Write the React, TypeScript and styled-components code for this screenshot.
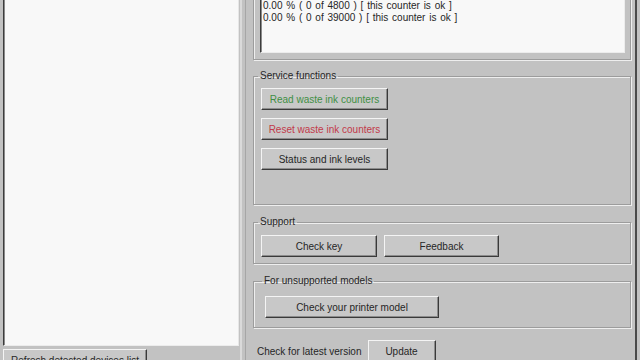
import styled, { createGlobalStyle } from "styled-components";

const GlobalStyle = createGlobalStyle`
  html, body {
    margin: 0;
    padding: 0;
    background: #c2c2c2;
  }
  body {
    font-family: "Liberation Sans", Arial, sans-serif;
    font-size: 10px;
    color: #262626;
  }
`;

const Window = styled.div`
  display: flex;
  width: 640px;
  height: 360px;
  overflow: hidden;
  background: #c2c2c2;
`;

const LeftPane = styled.div`
  display: flex;
  flex-direction: column;
  width: 239px;
  padding-left: 3px;
  box-sizing: border-box;
  flex-shrink: 0;
`;

const DeviceList = styled.div`
  margin-top: -10px;
  height: 356px;
  flex-shrink: 0;
  box-sizing: border-box;
  background: #f8f8f8;
  border: 1px solid;
  border-color: #3c3c3c #e6e6e6 #ececec #3c3c3c;
  box-shadow: inset 1px 1px 0 #8a8a8a;
`;

const Splitter = styled.div`
  width: 3px;
  margin-left: 1px;
  border-left: 2px solid #dadada;
  border-right: 1px solid #a6a6a6;
  flex-shrink: 0;
`;

const RightPane = styled.div`
  display: flex;
  flex-direction: column;
  width: 389px;
  padding: 0 4px 0 7px;
  box-sizing: border-box;
  flex-shrink: 0;
`;

const WindowEdge = styled.div`
  width: 2px;
  background: #4a4a4a;
  flex-shrink: 0;
`;

const TopGroup = styled.div`
  margin-top: -24px;
  flex-shrink: 0;
  padding: 8px 5px 6px 6px;
  border: 1px solid #9c9c9c;
  box-shadow: inset 1px 1px 0 #eeeeee, 1px 1px 0 #eeeeee;
`;

const CounterBox = styled.div`
  height: 68px;
  box-sizing: border-box;
  padding: 14px 2px 0;
  background: #f8f8f8;
  border: 1px solid;
  border-color: #3c3c3c #ececec #ececec #3c3c3c;
  box-shadow: inset 1px 1px 0 #8a8a8a;
  line-height: 12px;
  word-spacing: 1px;
  white-space: pre;
`;

const Group = styled.fieldset<{ $mt: number; $pt: number; $pb: number; $pl: number }>`
  margin: ${({ $mt }) => $mt}px 0 0;
  padding: ${({ $pt }) => $pt}px 6px ${({ $pb }) => $pb}px ${({ $pl }) => $pl}px;
  min-width: 0;
  flex-shrink: 0;
  border: 1px solid #9c9c9c;
  box-shadow: inset 1px 1px 0 #eeeeee, 1px 1px 0 #eeeeee;
`;

const GroupTitle = styled.legend`
  margin-left: -3px;
  padding: 0 2px;
  line-height: 12px;
  color: #262626;
`;

const ButtonStack = styled.div`
  display: flex;
  flex-direction: column;
  gap: 8px;
`;

const ButtonRow = styled.div`
  display: flex;
  gap: 7px;
`;

const tones = {
  plain: "#262626",
  green: "#3f8f45",
  red: "#c23a4a",
};

const Button = styled.button<{ $w: number; $tone?: keyof typeof tones }>`
  width: ${({ $w }) => $w}px;
  height: 22px;
  flex-shrink: 0;
  margin: 0;
  padding: 0;
  box-sizing: border-box;
  font-family: "Liberation Sans", Arial, sans-serif;
  font-size: 10px;
  color: ${({ $tone }) => tones[$tone ?? "plain"]};
  background: #c8c8c8;
  border: 1px solid;
  border-color: #f4f4f4 #3a3a3a #3a3a3a #f4f4f4;
  box-shadow: inset -1px -1px 0 #8c8c8c;
`;

const RefreshButton = styled(Button)`
  margin-top: 3px;
`;

const VersionRow = styled.div`
  display: flex;
  align-items: center;
  gap: 6px;
  margin-top: 12px;
  padding-left: 4px;
  flex-shrink: 0;
`;

const VersionLabel = styled.span`
  color: #262626;
`;

export default function App() {
  return (
    <>
      <GlobalStyle />
      <Window>
        <LeftPane>
          <DeviceList />
          <RefreshButton $w={144}>Refresh detected devices list</RefreshButton>
        </LeftPane>
        <Splitter />
        <RightPane>
          <TopGroup>
            <CounterBox>
              {"0.00 % ( 0 of 4800 ) [ this counter is ok ]\n0.00 % ( 0 of 39000 ) [ this counter is ok ]"}
            </CounterBox>
          </TopGroup>

          <Group $mt={10} $pt={6} $pb={34} $pl={7}>
            <GroupTitle>Service functions</GroupTitle>
            <ButtonStack>
              <Button $w={127} $tone="green">Read waste ink counters</Button>
              <Button $w={127} $tone="red">Reset waste ink counters</Button>
              <Button $w={127}>Status and ink levels</Button>
            </ButtonStack>
          </Group>

          <Group $mt={11} $pt={7} $pb={6} $pl={7}>
            <GroupTitle>Support</GroupTitle>
            <ButtonRow>
              <Button $w={116}>Check key</Button>
              <Button $w={115}>Feedback</Button>
            </ButtonRow>
          </Group>

          <Group $mt={11} $pt={9} $pb={9} $pl={11}>
            <GroupTitle>For unsupported models</GroupTitle>
            <Button $w={174}>Check your printer model</Button>
          </Group>

          <VersionRow>
            <VersionLabel>Check for latest version</VersionLabel>
            <Button $w={68}>Update</Button>
          </VersionRow>
        </RightPane>
        <WindowEdge />
      </Window>
    </>
  );
}
